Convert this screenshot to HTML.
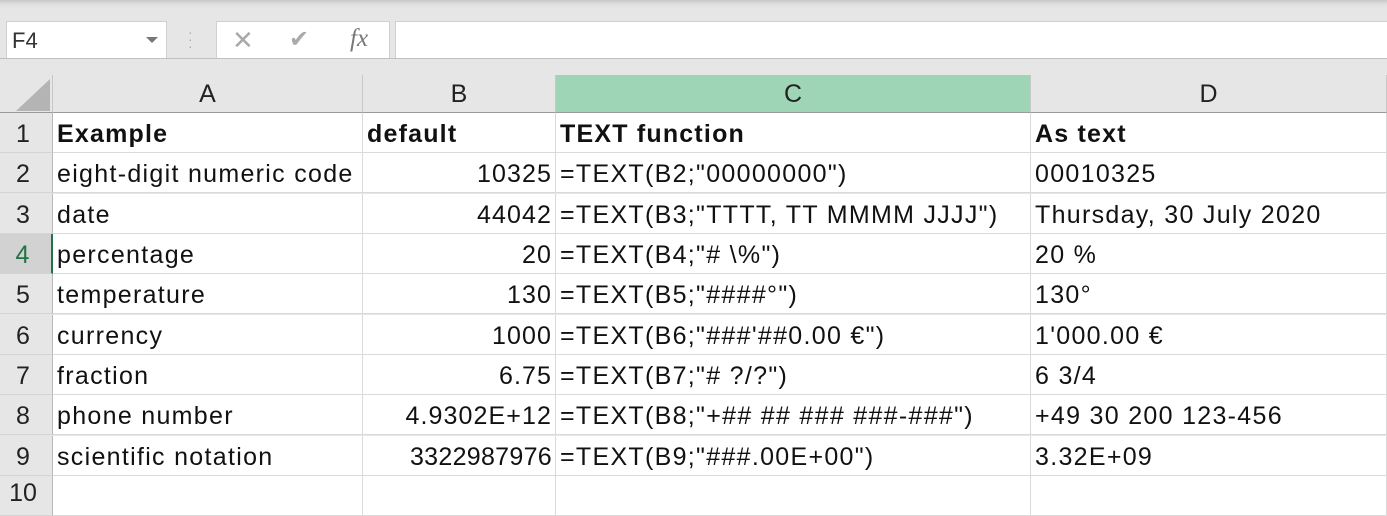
<!DOCTYPE html>
<html><head><meta charset="utf-8"><style>
*{margin:0;padding:0;box-sizing:border-box}
body{width:1387px;height:493px;overflow:hidden;background:#e6e6e6;font-family:"Liberation Sans",sans-serif;position:relative}
.top{position:absolute;left:0;top:0;width:1387px;height:20px;background:linear-gradient(#c8c8c8 0,#dedede 4px,#e6e6e6 8px)}
.box{position:absolute;background:#fff;border:1px solid #d0d0d0}
.abs{position:absolute}
.ch{position:absolute;top:75px;height:38px;background:#e6e6e6;border-right:1px solid #c8c8c8;border-bottom:1px solid #9a9a9a;font-size:25px;color:#222;text-align:center;line-height:38px}
.rh{position:absolute;left:0;width:53px;height:40px;background:#e6e6e6;border-bottom:1px solid #d4d4d4;border-right:1px solid #b8b8b8;font-size:25px;color:#222;text-align:center;line-height:42px;padding-right:6px}
.c{position:absolute;height:40px;background:#fff;border-right:1px solid #dadada;border-bottom:1px solid #dadada;font-size:25px;line-height:42px;color:#111;white-space:nowrap;overflow:hidden;padding:0 4px;letter-spacing:1.3px}
.r{text-align:right;padding-right:3px;letter-spacing:1.1px}
.b{font-weight:bold;letter-spacing:1.2px}
</style></head><body>
<div class="top"></div>
<div class="box" style="left:6px;top:21px;width:161px;height:38px;font-size:22px;line-height:38px;padding-left:5px;color:#333">F4</div>
<div class="abs" style="left:146px;top:37px;width:0;height:0;border-left:6px solid transparent;border-right:6px solid transparent;border-top:6px solid #777"></div>
<div class="abs" style="left:188px;top:29px;color:#aaa;font-size:14px;line-height:7px">·<br>·<br>·</div>
<div class="box" style="left:216px;top:21px;width:174px;height:38px"></div>
<div class="abs" style="left:232px;top:25px;font-size:26px;color:#aaa">✕</div>
<div class="abs" style="left:289px;top:25px;font-size:24px;color:#aaa">✔</div>
<div class="abs" style="left:350px;top:25px;font-size:25px;color:#777;font-family:'Liberation Serif',serif;font-style:italic">fx</div>
<div class="box" style="left:395px;top:21px;width:992px;height:38px;border-right:none"></div>
<div class="abs" style="left:0;top:58px;width:1387px;height:1px;background:#c0c0c0"></div>
<div class="ch" style="left:0;width:53px;"><div style="position:absolute;left:16px;top:4px;width:0;height:0;border-left:34px solid transparent;border-bottom:32px solid #b4b4b4"></div></div>
<div class="ch" style="left:53px;width:310px">A</div>
<div class="ch" style="left:363px;width:193px">B</div>
<div class="ch" style="left:556px;width:475px;background:#9fd5b7">C</div>
<div class="ch" style="left:1031px;width:356px">D</div>

<div class="rh" style="top:113px">1</div>
<div class="rh" style="top:153px">2</div>
<div class="rh" style="top:194px">3</div>
<div class="rh" style="top:234px;background:#d2d2d2;color:#217346;border-right:2px solid #217346">4</div>
<div class="rh" style="top:274px">5</div>
<div class="rh" style="top:315px">6</div>
<div class="rh" style="top:355px">7</div>
<div class="rh" style="top:395px">8</div>
<div class="rh" style="top:436px">9</div>
<div class="rh" style="top:476px;line-height:34px">10</div>

<div class="c b" style="left:53px;top:113px;width:310px">Example</div>
<div class="c b" style="left:363px;top:113px;width:193px">default</div>
<div class="c b" style="left:556px;top:113px;width:475px">TEXT function</div>
<div class="c b" style="left:1031px;top:113px;width:356px">As text</div>

<div class="c" style="left:53px;top:153px;width:310px">eight-digit numeric code</div>
<div class="c r" style="left:363px;top:153px;width:193px">10325</div>
<div class="c" style="left:556px;top:153px;width:475px">=TEXT(B2;"00000000")</div>
<div class="c" style="left:1031px;top:153px;width:356px">00010325</div>

<div class="c" style="left:53px;top:194px;width:310px">date</div>
<div class="c r" style="left:363px;top:194px;width:193px">44042</div>
<div class="c" style="left:556px;top:194px;width:475px">=TEXT(B3;"TTTT, TT MMMM JJJJ")</div>
<div class="c" style="left:1031px;top:194px;width:356px">Thursday, 30 July 2020</div>

<div class="c" style="left:53px;top:234px;width:310px">percentage</div>
<div class="c r" style="left:363px;top:234px;width:193px">20</div>
<div class="c" style="left:556px;top:234px;width:475px">=TEXT(B4;"# \%")</div>
<div class="c" style="left:1031px;top:234px;width:356px">20 %</div>

<div class="c" style="left:53px;top:274px;width:310px">temperature</div>
<div class="c r" style="left:363px;top:274px;width:193px">130</div>
<div class="c" style="left:556px;top:274px;width:475px">=TEXT(B5;"####°")</div>
<div class="c" style="left:1031px;top:274px;width:356px">130°</div>

<div class="c" style="left:53px;top:315px;width:310px">currency</div>
<div class="c r" style="left:363px;top:315px;width:193px">1000</div>
<div class="c" style="left:556px;top:315px;width:475px">=TEXT(B6;"###'##0.00 €")</div>
<div class="c" style="left:1031px;top:315px;width:356px">1'000.00 €</div>

<div class="c" style="left:53px;top:355px;width:310px">fraction</div>
<div class="c r" style="left:363px;top:355px;width:193px">6.75</div>
<div class="c" style="left:556px;top:355px;width:475px">=TEXT(B7;"# ?/?")</div>
<div class="c" style="left:1031px;top:355px;width:356px">6 3/4</div>

<div class="c" style="left:53px;top:395px;width:310px">phone number</div>
<div class="c r" style="left:363px;top:395px;width:193px">4.9302E+12</div>
<div class="c" style="left:556px;top:395px;width:475px">=TEXT(B8;"+## ## ### ###-###")</div>
<div class="c" style="left:1031px;top:395px;width:356px">+49 30 200 123-456</div>

<div class="c" style="left:53px;top:436px;width:310px">scientific notation</div>
<div class="c r" style="left:363px;top:436px;width:193px;letter-spacing:0.3px">3322987976</div>
<div class="c" style="left:556px;top:436px;width:475px">=TEXT(B9;"###.00E+00")</div>
<div class="c" style="left:1031px;top:436px;width:356px">3.32E+09</div>

<div class="c" style="left:53px;top:476px;width:310px"></div>
<div class="c" style="left:363px;top:476px;width:193px"></div>
<div class="c" style="left:556px;top:476px;width:475px"></div>
<div class="c" style="left:1031px;top:476px;width:356px"></div>
</body></html>
